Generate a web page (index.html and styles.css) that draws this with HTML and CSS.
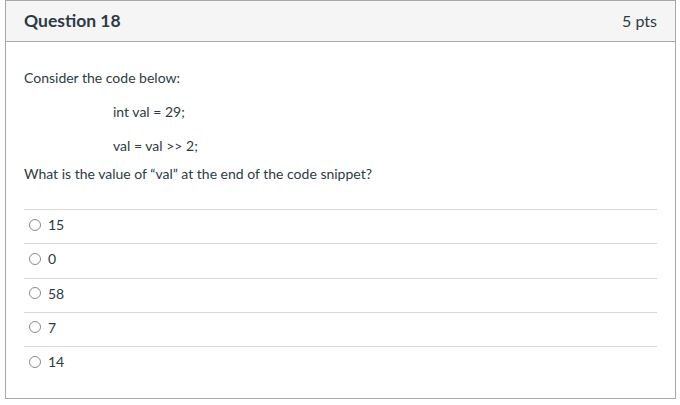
FILE: index.html
```html
<!DOCTYPE html>
<html>
<head>
<meta charset="utf-8">
<link rel="stylesheet" href="styles.css">
</head>
<body>
<div class="question">
  <div class="header">
    <span class="title">Question 18</span>
    <span class="pts">5 pts</span>
  </div>
  <div class="content">
    <p class="text">Consider the code below:</p>
    <p class="code">int val = 29;</p>
    <p class="code">val = val &gt;&gt; 2;</p>
    <p class="text last">What is the value of “val” at the end of the code snippet?</p>
    <div class="answers">
      <div class="answer"><span class="radio"></span><span>15</span></div>
      <div class="answer"><span class="radio"></span><span>0</span></div>
      <div class="answer"><span class="radio"></span><span>58</span></div>
      <div class="answer"><span class="radio"></span><span>7</span></div>
      <div class="answer"><span class="radio"></span><span>14</span></div>
    </div>
  </div>
</div>
</body>
</html>
```
FILE: styles.css
```css
html, body {
  margin: 0;
  padding: 0;
  background: #fff;
}
body {
  padding: 0 3px 0 5px;
  font-family: Lato, "Open Sans", sans-serif;
  color: #2d3b45;
  font-size: 14px;
}
.question {
  width: 671px;
  border: 1px solid #a8a8a8;
  box-sizing: border-box;
  height: 399px;
}
.header {
  height: 40px;
  background: #f5f5f5;
  border-bottom: 1px solid #a8a8a8;
  display: flex;
  align-items: center;
  justify-content: space-between;
  padding: 0 18px;
}
.title {
  font-weight: 700;
  font-size: 17.5px;
  color: #2d3b45;
  margin-top: -2px;
}
.pts {
  font-size: 16px;
  color: #2d3b45;
  margin-top: -2px;
}
.content {
  padding: 25px 18px 0 18px;
}
.text {
  margin: 0;
  line-height: 21px;
}
.code {
  margin: 0;
  padding-left: 89px;
  line-height: 21px;
}
.content p + p {
  margin-top: 13px;
}
.content p.last {
  margin-top: 7px;
}
.answers {
  margin-top: 25px;
}
.answer {
  border-top: 1px solid #d8d8d8;
  display: flex;
  align-items: center;
  padding-left: 5px;
  padding-bottom: 4px;
  box-sizing: border-box;
  height: 34.25px;
  gap: 7px;
}
.radio {
  width: 12px;
  height: 12px;
  border: 1px solid #8a8a8a;
  border-radius: 50%;
  box-sizing: border-box;
}
```
